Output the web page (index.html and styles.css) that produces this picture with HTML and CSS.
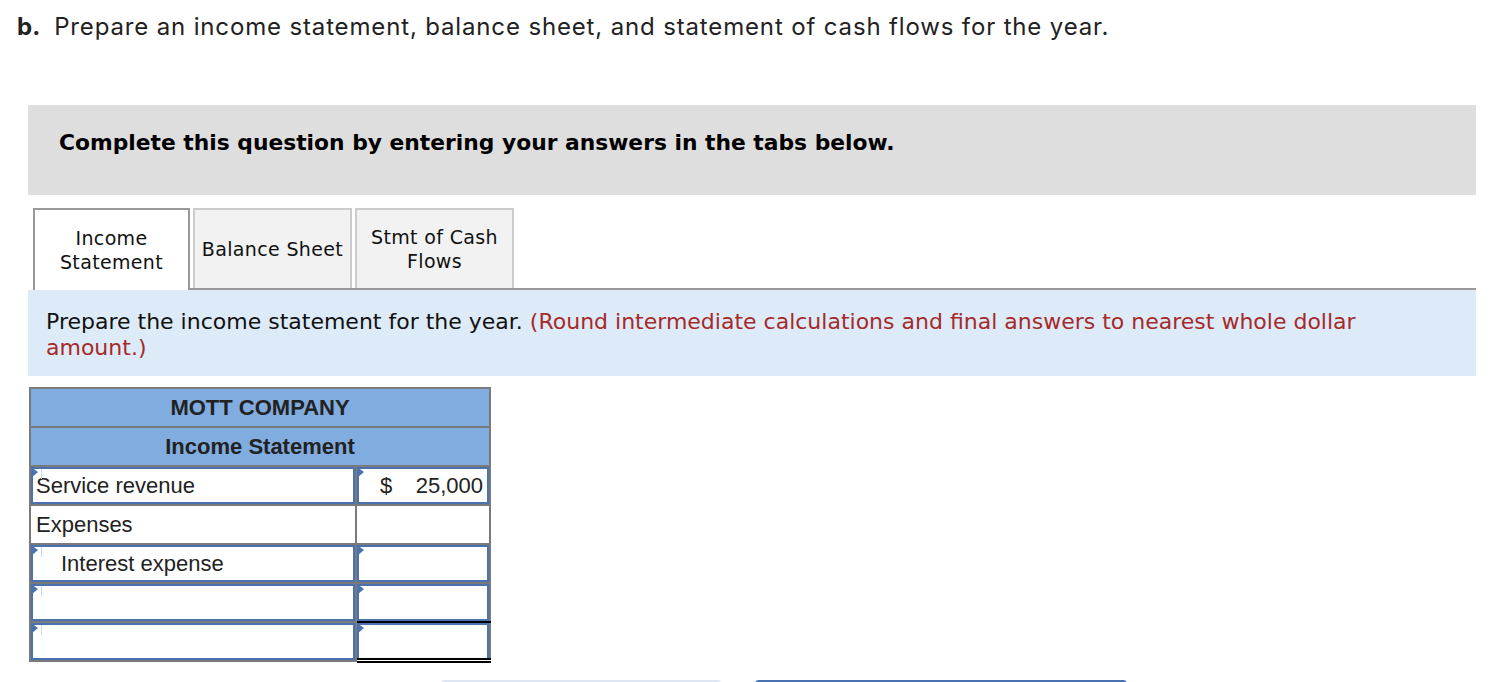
FILE: index.html
```html
<!DOCTYPE html>
<html>
<head>
<meta charset="utf-8">
<link rel="stylesheet" href="styles.css">
</head>
<body>
<div class="page">
  <p class="question"><b class="qlabel">b.</b><span class="qtext">Prepare an income statement, balance sheet, and statement of cash flows for the year.</span></p>

  <div class="instructions">Complete this question by entering your answers in the tabs below.</div>

  <div class="tabs">
    <div class="tab active">Income<br>Statement</div>
    <div class="tab">Balance Sheet</div>
    <div class="tab">Stmt of Cash<br>Flows</div>
  </div>

  <div class="prompt"><span class="lead">Prepare the income statement for the year.</span> <span class="note">(Round intermediate calculations and final answers to nearest whole dollar</span><br><span class="note">amount.)</span></div>

  <div class="sheet">
    <div class="cell head">MOTT COMPANY</div>
    <div class="cell head">Income Statement</div>

    <div class="cell"><div class="input">Service revenue</div></div>
    <div class="cell"><div class="input amount"><span>$</span><span>25,000</span></div></div>

    <div class="cell plain">Expenses</div>
    <div class="cell plain"></div>

    <div class="cell"><div class="input indent">Interest expense</div></div>
    <div class="cell"><div class="input amount"></div></div>

    <div class="cell"><div class="input"></div></div>
    <div class="cell single"><div class="input amount"></div></div>

    <div class="cell"><div class="input"></div></div>
    <div class="cell double"><div class="input amount"></div></div>
  </div>

  <div class="buttons">
    <div class="btn prev"></div>
    <div class="btn next"></div>
  </div>
</div>
</body>
</html>
```

FILE: styles.css
```css
html, body {
  margin: 0;
  padding: 0;
  background: #fff;
}

.page {
  width: 1508px;
  color: #222;
}

.question {
  margin: 12px 0 0 17px;
  font-family: Inter, "Open Sans", sans-serif;
  font-size: 24px;
  line-height: 30px;
  letter-spacing: 0.85px;
  color: #222;
}

.qlabel {
  font-weight: 700;
  margin-right: 14px;
  letter-spacing: 0;
}

.instructions {
  margin: 63px 0 0 28px;
  width: 1448px;
  height: 90px;
  box-sizing: border-box;
  padding: 0 0 15px 31px;
  display: flex;
  align-items: center;
  background: #dedede;
  font-family: "DejaVu Sans", Verdana, sans-serif;
  font-weight: 700;
  font-size: 21.8px;
  color: #000;
}

.tabs {
  margin: 13px 0 0 33px;
  width: 1443px;
  display: flex;
  gap: 3px;
  border-bottom: 2px solid #999;
}

.tab {
  width: 159px;
  height: 80px;
  box-sizing: border-box;
  border: 2px solid #ccc;
  border-bottom: none;
  background: #f2f2f2;
  display: flex;
  align-items: center;
  justify-content: center;
  text-align: center;
  font-family: "DejaVu Sans", Verdana, sans-serif;
  font-size: 19px;
  line-height: 24px;
  letter-spacing: 0.35px;
  color: #111;
}

.tab.active {
  width: 157px;
  height: 82px;
  margin-bottom: -2px;
  background: #fff;
  border-color: #999;
}

.prompt {
  margin-left: 28px;
  width: 1448px;
  height: 86px;
  box-sizing: border-box;
  padding: 19px 40px 0 18px;
  background: #ddebf8;
  font-family: "DejaVu Sans", Verdana, sans-serif;
  font-size: 22px;
  line-height: 26px;
  color: #111;
  white-space: nowrap;
}

.note {
  color: #a52a2a;
}

.sheet {
  margin: 11px 0 0 29px;
  width: 462px;
  box-sizing: border-box;
  padding: 2px;
  background: #7a7a7a;
  display: grid;
  grid-template-columns: 324px 132px;
  grid-auto-rows: 37px;
  gap: 2px;
  font-family: "Liberation Sans", Arial, sans-serif;
  font-size: 22px;
  color: #222;
}

.cell {
  position: relative;
  background: #fff;
}

.cell.head {
  grid-column: 1 / 3;
  background: #80acdf;
  font-weight: 700;
  display: flex;
  align-items: center;
  justify-content: center;
}

.cell.plain {
  display: flex;
  align-items: center;
  padding-left: 5px;
}

.input {
  height: 100%;
  box-sizing: border-box;
  border: 2px solid #4a72b0;
  display: flex;
  align-items: center;
  padding-left: 3px;
  position: relative;
}

.input::before {
  content: "";
  position: absolute;
  left: -2px;
  top: -2px;
  border-left: 7px solid #4a72b0;
  border-top: 5px solid transparent;
  border-bottom: 6px solid transparent;
}

.input::after {
  content: "";
  position: absolute;
  left: 8px;
  top: 0;
  width: 1px;
  height: 10px;
  background: #c9d8ee;
}

.input.amount::after {
  display: none;
}

.input.indent {
  padding-left: 28px;
}

.input.amount {
  justify-content: space-between;
  padding: 0 4px 0 21px;
}

.cell.single::after {
  content: "";
  position: absolute;
  left: 0;
  right: -2px;
  bottom: -2px;
  height: 2px;
  background: #000;
}

.cell.double::after {
  content: "";
  position: absolute;
  left: 0;
  right: -2px;
  bottom: -3px;
  height: 1px;
  border-top: 2px solid #000;
  border-bottom: 2px solid #000;
  background: #fff;
}

.buttons {
  display: flex;
  margin: 18px 0 0 441px;
  gap: 34px;
}

.btn {
  height: 40px;
  border-radius: 4px;
}

.btn.prev {
  width: 280px;
  background: #dde6f2;
}

.btn.next {
  width: 372px;
  background: #4a72b0;
}
```
